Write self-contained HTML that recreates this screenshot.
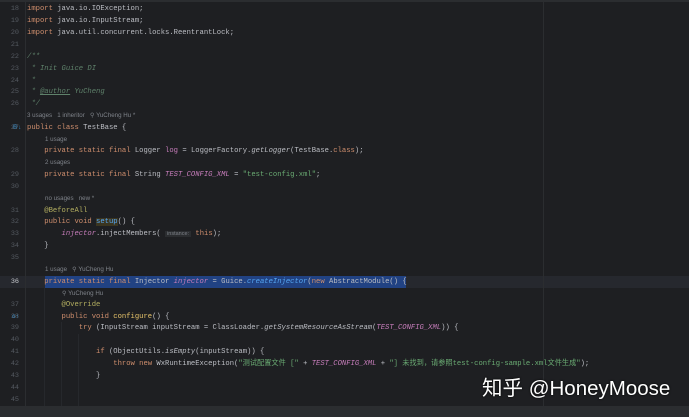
<!DOCTYPE html>
<html><head><meta charset="utf-8"><style>
body{margin:0;width:689px;height:417px;background:#1e1f22;overflow:hidden;position:relative;font-family:"Liberation Mono","Noto Sans CJK SC",monospace;}
.l{position:absolute;left:0;height:12px;line-height:12px;font-size:7.2px;color:#bcbec4;white-space:pre;width:689px}
.n{position:absolute;left:3px;width:16px;text-align:right;color:#555a61;font-size:6.8px}
.c{position:absolute;left:27px}
.h{position:absolute;font-family:"Liberation Sans",sans-serif;font-size:6.2px;color:#7f838a;white-space:pre}
.k{color:#cf8e6d}.s{color:#6aab73}.jd{color:#5f826b;font-style:italic}.cm{color:#7a7e85}.an{color:#b3ae60}.f{color:#c77dbb;font-style:italic}.fi{color:#c77dbb}.m{color:#56a8f5}.it{font-style:italic}
.g{position:absolute;top:0;bottom:11px;width:1px;background:#2b2d30}
</style></head><body>
<div style="position:absolute;left:0;top:0;width:689px;height:2px;background:#2b2d30"></div>
<div style="position:absolute;left:0;top:276px;width:689px;height:12px;background:#26282e"></div>
<div style="position:absolute;left:45px;top:276px;width:361px;height:12px;background:#214283"></div>
<div class="g" style="left:25px;top:2px"></div>
<div class="g" style="left:543px;top:2px"></div>
<div class="g" style="left:44px;top:288px;background:#26282c"></div>
<div class="g" style="left:61px;top:322px;background:#26282c"></div>
<div class="g" style="left:78px;top:334px;background:#26282c"></div>

<div class="l" style="top:3px"><span class="n">18</span><span class="c"><span class="k">import</span> java.io.IOException;</span></div>
<div class="l" style="top:15px"><span class="n">19</span><span class="c"><span class="k">import</span> java.io.InputStream;</span></div>
<div class="l" style="top:27px"><span class="n">20</span><span class="c"><span class="k">import</span> java.util.concurrent.locks.ReentrantLock;</span></div>
<div class="l" style="top:39px"><span class="n">21</span></div>
<div class="l" style="top:51px"><span class="n">22</span><span class="c jd">/**</span></div>
<div class="l" style="top:63px"><span class="n">23</span><span class="c jd"> * Init Guice DI</span></div>
<div class="l" style="top:75px"><span class="n">24</span><span class="c jd"> *</span></div>
<div class="l" style="top:86px"><span class="n">25</span><span class="c jd"> * <u>@author</u> YuCheng</span></div>
<div class="l" style="top:98px"><span class="n">26</span><span class="c jd"> */</span></div>
<div class="h" style="left:27px;top:112px">3 usages   1 inheritor   ⚲ YuCheng Hu *</div>
<div class="l" style="top:122px"><span class="n">27</span><span style="position:absolute;left:12px;color:#3d8fc9;font-size:6px">⊕↓</span><span class="c"><span class="k">public class</span> TestBase {</span></div>
<div class="h" style="left:45px;top:136px">1 usage</div>
<div class="l" style="top:145px"><span class="n">28</span><span class="c">    <span class="k">private static final</span> Logger <span class="fi">log</span> = LoggerFactory.<span class="it">getLogger</span>(TestBase.<span class="k">class</span>);</span></div>
<div class="h" style="left:45px;top:159px">2 usages</div>
<div class="l" style="top:169px"><span class="n">29</span><span class="c">    <span class="k">private static final</span> String <span class="f">TEST_CONFIG_XML</span> = <span class="s">"test-config.xml"</span>;</span></div>
<div class="l" style="top:181px"><span class="n">30</span></div>
<div class="h" style="left:45px;top:195px">no usages   new *</div>
<div class="l" style="top:205px"><span class="n">31</span><span class="c">    <span class="an">@BeforeAll</span></span></div>
<div class="l" style="top:216px"><span class="n">32</span><span class="c">    <span class="k">public void</span> <span style="color:#56a8f5;background:#3b3520">setup</span>() {</span></div>
<div class="l" style="top:228px"><span class="n">33</span><span class="c">        <span class="f">injector</span>.injectMembers( <span style="font-family:'Liberation Sans';font-size:5.5px;color:#7f838a;background:#2b2d30;padding:0 2px">instance:</span> <span class="k">this</span>);</span></div>
<div class="l" style="top:240px"><span class="n">34</span><span class="c">    }</span></div>
<div class="l" style="top:252px"><span class="n">35</span></div>
<div class="h" style="left:45px;top:266px">1 usage   ⚲ YuCheng Hu</div>
<div class="l" style="top:276px"><span class="n" style="color:#c8cacf">36</span><span class="c">    <span class="k">private static final</span> Injector <span class="f">injector</span> = Guice.<span class="it m">createInjector</span>(<span class="k">new</span> AbstractModule() {</span></div>
<div class="h" style="left:62px;top:290px">⚲ YuCheng Hu</div>
<div class="l" style="top:299px"><span class="n">37</span><span class="c">        <span class="an">@Override</span></span></div>
<div class="l" style="top:311px"><span class="n">38</span><span style="position:absolute;left:12px;color:#3d8fc9;font-size:6px">o↑</span><span class="c">        <span class="k">public void</span> <span style="color:#e8c46a">configure</span>() {</span></div>
<div class="l" style="top:322px"><span class="n">39</span><span class="c">            <span class="k">try</span> (InputStream inputStream = ClassLoader.<span class="it">getSystemResourceAsStream</span>(<span class="f">TEST_CONFIG_XML</span>)) {</span></div>
<div class="l" style="top:334px"><span class="n">40</span></div>
<div class="l" style="top:346px"><span class="n">41</span><span class="c">                <span class="k">if</span> (ObjectUtils.<span class="it">isEmpty</span>(inputStream)) {</span></div>
<div class="l" style="top:358px"><span class="n">42</span><span class="c">                    <span class="k">throw new</span> WxRuntimeException(<span class="s">"测试配置文件 ["</span> + <span class="f">TEST_CONFIG_XML</span> + <span class="s">"] 未找到，请参照test-config-sample.xml文件生成"</span>);</span></div>
<div class="l" style="top:370px"><span class="n">43</span><span class="c">                }</span></div>
<div class="l" style="top:382px"><span class="n">44</span></div>
<div class="l" style="top:394px"><span class="n">45</span></div>
<div style="position:absolute;left:0;top:406px;width:689px;height:11px;background:#2b2d30"></div>
<div style="position:absolute;left:482px;top:371px;font-family:'Liberation Sans','Noto Sans CJK SC',sans-serif;font-size:20.5px;color:#fff;white-space:pre;text-shadow:0 0 2px #000">知乎 @HoneyMoose</div>
</body></html>
